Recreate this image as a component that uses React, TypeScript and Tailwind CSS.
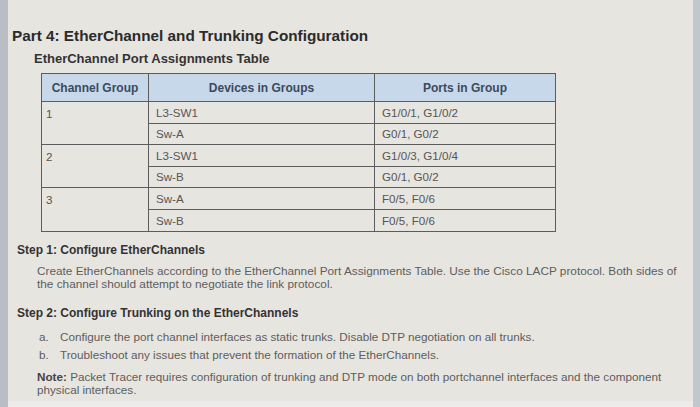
const rows = [
  { group: "1", devices: ["L3-SW1", "Sw-A"], ports: ["G1/0/1, G1/0/2", "G0/1, G0/2"] },
  { group: "2", devices: ["L3-SW1", "Sw-B"], ports: ["G1/0/3, G1/0/4", "G0/1, G0/2"] },
  { group: "3", devices: ["Sw-A", "Sw-B"], ports: ["F0/5, F0/6", "F0/5, F0/6"] },
];

function PortTable() {
  return (
    <table className="ml-[33px] mt-[6px] w-[515px] border-collapse text-[11.6px] text-[#555]">
      <thead>
        <tr className="h-[28px] bg-[#c8d8eb] text-[12px] font-bold text-[#3b4a5c]">
          <th className="w-[107px] border border-[#5c5c5c] font-bold">Channel Group</th>
          <th className="w-[226px] border border-[#5c5c5c] font-bold">Devices in Groups</th>
          <th className="border border-[#5c5c5c] font-bold">Ports in Group</th>
        </tr>
      </thead>
      <tbody>
        {rows.map((r) =>
          r.devices.map((d, i) => (
            <tr key={r.group + i} className="h-[21.6px]">
              {i === 0 && (
                <td rowSpan={2} className="border border-[#5c5c5c] px-[4px] pt-[3px] align-top">
                  {r.group}
                </td>
              )}
              <td className="border border-[#5c5c5c] px-[7px]">{d}</td>
              <td className="border border-[#5c5c5c] px-[7px]">{r.ports[i]}</td>
            </tr>
          ))
        )}
      </tbody>
    </table>
  );
}

export default function App() {
  return (
    <div className="flex h-[407px] w-[700px] overflow-hidden bg-[#e7e5e0] font-['Liberation_Sans',Arial,sans-serif]">
      {/* left screen edge */}
      <div className="w-[8px] bg-[#b9bec5]" />

      <div className="flex-1 flex flex-col">
        <div className="flex-1 pt-[27px]">
          <h1 className="pl-[4px] text-[15.3px] font-bold leading-[18px] text-[#2b2b2b]">
            Part 4: EtherChannel and Trunking Configuration
          </h1>
          <h2 className="mt-[6px] pl-[26px] text-[13px] font-bold leading-[16px] text-[#333]">
            EtherChannel Port Assignments Table
          </h2>

          <PortTable />

          <div className="mt-[11px] pl-[9px] text-[12px] font-bold leading-[15px] text-[#333]">
            Step 1: Configure EtherChannels
          </div>
          <p className="mt-[7px] pl-[29px] pr-[4px] text-[11.8px] leading-[13px] text-[#5d5d5d]">
            Create EtherChannels according to the EtherChannel Port Assignments Table. Use the Cisco LACP protocol. Both sides of the channel should attempt to negotiate the link protocol.
          </p>

          <div className="mt-[15px] pl-[9px] text-[12px] font-bold leading-[15px] text-[#333]">
            Step 2: Configure Trunking on the EtherChannels
          </div>
          <div className="mt-[9px] flex flex-col text-[11.7px] leading-[13px] text-[#5d5d5d]">
            <div className="flex pl-[31px]">
              <span className="w-[21px]">a.</span>
              <span>Configure the port channel interfaces as static trunks. Disable DTP negotiation on all trunks.</span>
            </div>
            <div className="mt-[5px] flex pl-[31px]">
              <span className="w-[21px]">b.</span>
              <span>Troubleshoot any issues that prevent the formation of the EtherChannels.</span>
            </div>
            <p className="mt-[9px] pl-[29px] pr-[20px] leading-[13.5px]">
              <span className="font-bold text-[#444]">Note: </span>
              <span>Packet Tracer requires configuration of trunking and DTP mode on both portchannel interfaces and the component physical interfaces.</span>
            </p>
          </div>
        </div>
        {/* bottom edge */}
        <div className="h-[6px] bg-[#ecebea]" />
      </div>

      {/* right screen edge */}
      <div className="w-[7px] bg-[#c2c7ce]" />
    </div>
  );
}
